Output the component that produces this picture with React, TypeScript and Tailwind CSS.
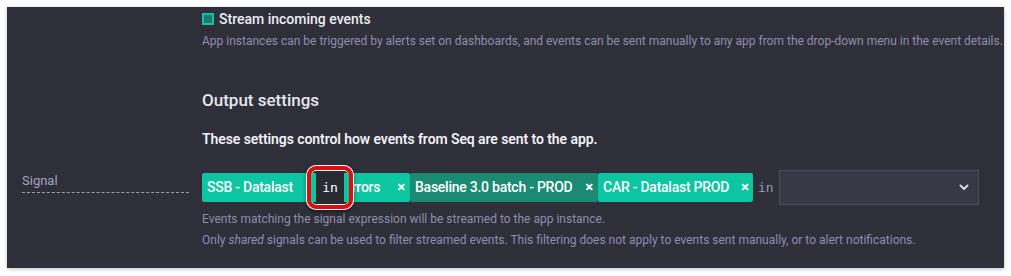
import React from "react";

type ChipProps = {
  label: string;
  dark?: boolean;
  className?: string;
};

function Chip({ label, dark, className }: ChipProps) {
  return (
    <div
      className={`flex h-[29px] items-center justify-between gap-[12px] rounded-[2px] pl-[5px] pr-[5px] text-[14px] font-medium tracking-[-0.25px] text-white ${
        dark ? "bg-[#1a8a73]" : "bg-[#0cc5a1]"
      } ${className ?? ""}`}
    >
      <span className="whitespace-nowrap">{label}</span>
      <span className="text-[15px] font-bold leading-none">×</span>
    </div>
  );
}

export default function App() {
  return (
    <div
      className="bg-white p-[7px] pb-[8px]"
      style={{ fontFamily: "Roboto, 'Noto Sans', sans-serif" }}
    >
      <div className="grid h-[261px] w-[997px] grid-cols-[195px_1fr] bg-[#2f2f3a] shadow-[0_1px_4px_rgba(0,0,0,0.25)]">
        {/* left column, only the signal label */}
        <div className="flex flex-col">
          <div className="h-[164px]" />
          <div className="ml-[15px] mr-[13px] mt-[2px] border-b border-dashed border-[#9d9db6] pb-[3px] text-[13px] leading-[16px] text-[#a3a3bc]">
            Signal
          </div>
        </div>

        <div className="flex flex-col">
          <div className="mt-[4px] flex h-[16px] items-center gap-[5px]">
            <span className="block h-[12px] w-[12px] border-2 border-[#12c3a1] bg-[#1d7b6d]" />
            <span className="text-[14px] font-medium leading-[16px] text-[#ececf2]">
              Stream incoming events
            </span>
          </div>
          <p className="mt-[6px] whitespace-nowrap text-[12px] leading-[16px] text-[#8e8eac]">
            App instances can be triggered by alerts set on dashboards, and events can be sent manually to any app from the drop-down menu in the event details.
          </p>

          <h2 className="mt-[41px] text-[17px] font-medium leading-[21px] text-[#e6e6ee]">
            Output settings
          </h2>
          <p className="mt-[20px] text-[14px] font-semibold tracking-[-0.08px] leading-[17px] text-[#f0f0f5]">
            These settings control how events from Seq are sent to the app.
          </p>

          <div className="relative mt-[22px] flex h-[35px] items-center">
            <Chip label="SSB - Datalast" className="w-[105px]" />
            <Chip label="Errors" className="w-[103px] pl-[37px]" />
            <Chip label="Baseline 3.0 batch - PROD" dark className="w-[188px]" />
            <Chip label="CAR - Datalast PROD" className="w-[155px]" />
            <span className="ml-[5px] text-[13px] text-[#9a9ab3]" style={{ fontFamily: "'DejaVu Sans Mono', monospace" }}>
              in
            </span>
            <div className="ml-[5px] flex h-[35px] w-[200px] items-center justify-end border border-[#4c4c5f] bg-[#393945] pr-[9px]">
              <svg width="10" height="7" viewBox="0 0 10 7" fill="none">
                <path d="M1.5 1.5L5 5L8.5 1.5" stroke="#d8d8e2" strokeWidth="2" strokeLinecap="round" strokeLinejoin="round" />
              </svg>
            </div>

            {/* highlight annotation over the "in" box */}
            <div className="absolute left-[105px] top-[-4px] flex h-[43px] w-[46px] items-center rounded-[9px] border-4 border-[#e00d0d] bg-[#2a2a33] shadow-[0_0_0_1px_#ffffff,inset_0_0_0_1px_#ffffff,0_2px_5px_rgba(0,0,0,0.6)]">
              <span className="h-[29px] w-[5px] bg-[#0cc5a1]" />
              <span
                className="flex h-full flex-1 items-center justify-center text-[13px] text-white"
                style={{ fontFamily: "'DejaVu Sans Mono', monospace" }}
              >
                in
              </span>
              <span className="h-[29px] w-[5px] bg-[#0cc5a1]" />
            </div>
          </div>

          <p className="mt-[6px] text-[12px] leading-[16px] text-[#8e8eac]">
            Events matching the signal expression will be streamed to the app instance.
          </p>
          <p className="mt-[5px] text-[12px] leading-[16px] text-[#8e8eac]">
            Only <em>shared</em> signals can be used to filter streamed events. This filtering does not apply to events sent manually, or to alert notifications.
          </p>
        </div>
      </div>
    </div>
  );
}
